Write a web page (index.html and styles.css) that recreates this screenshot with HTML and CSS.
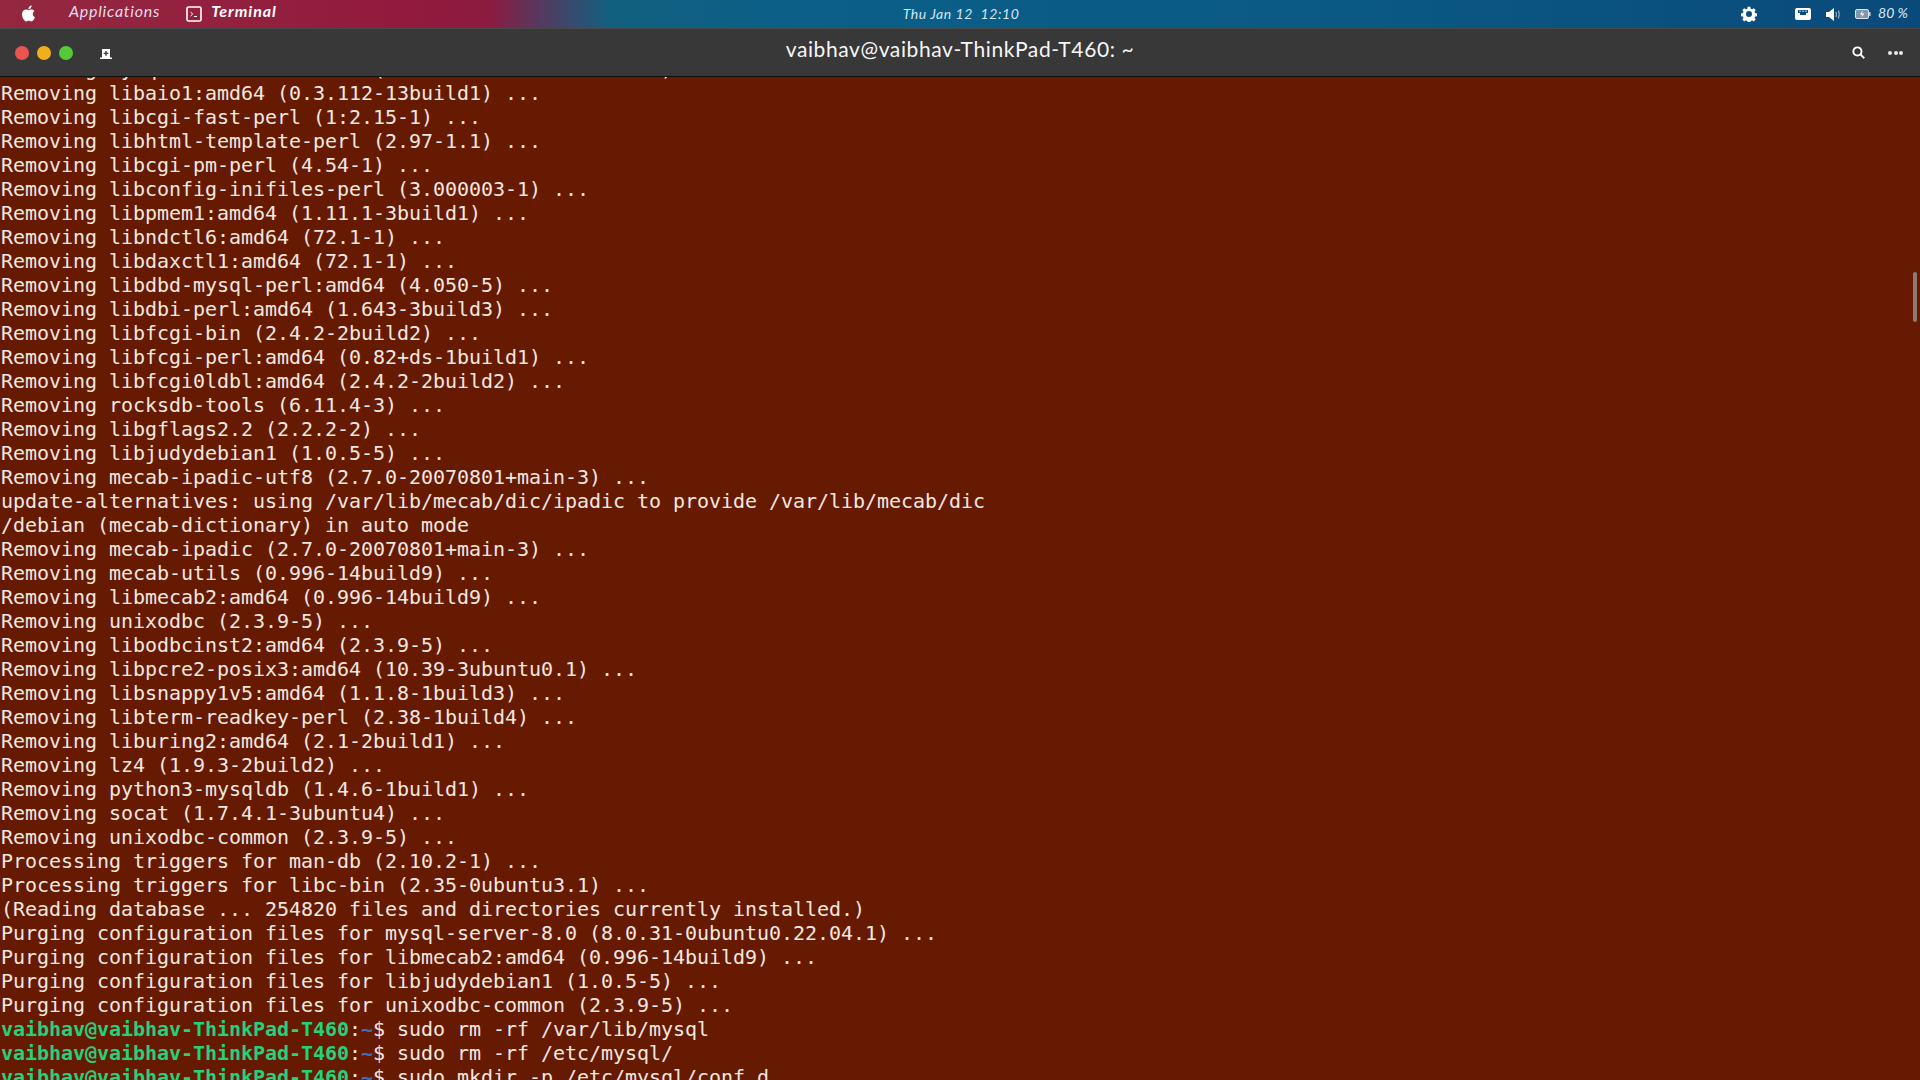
FILE: index.html
```html
<!DOCTYPE html>
<html lang="en">
<head>
<meta charset="utf-8">
<title>vaibhav@vaibhav-ThinkPad-T460: ~</title>
<link rel="stylesheet" href="styles.css">
</head>
<body>
<header class="topbar">
  <div class="topbar-left">
    <svg class="apple" viewBox="0 0 24 24"><path fill="#fff" d="M18.71 19.5c-.83 1.24-1.71 2.45-3.05 2.47-1.34.03-1.77-.79-3.29-.79-1.53 0-2 .77-3.27.82-1.31.05-2.3-1.32-3.14-2.53C4.25 17 2.94 12.45 4.7 9.39c.87-1.52 2.43-2.48 4.12-2.51 1.28-.02 2.5.87 3.29.87.78 0 2.26-1.07 3.81-.91.65.03 2.47.26 3.64 1.98-.09.06-2.17 1.28-2.15 3.81.03 3.02 2.65 4.03 2.68 4.04-.03.07-.42 1.44-1.38 2.83M13 3.5c.73-.83 1.94-1.46 2.94-1.5.13 1.17-.34 2.35-1.04 3.19-.69.85-1.83 1.51-2.95 1.42-.15-1.15.41-2.35 1.05-3.11z"/></svg>
    <span class="menu-apps">Applications</span>
    <svg class="term-icon" viewBox="0 0 16 16"><rect x="1" y="1" width="14" height="14" rx="1.5" fill="none" stroke="#fff" stroke-width="1.6"/><path d="M4.5 6l2.2 2-2.2 2M8 10.5h3" fill="none" stroke="#fff" stroke-width="1"/></svg>
    <span class="menu-term">Terminal</span>
  </div>
  <div class="clock">Thu Jan 12&nbsp; 12:10</div>
  <div class="topbar-right">
    <svg class="gear" viewBox="0 0 24 24"><path fill="#fff" fill-rule="evenodd" d="M10 1h4l.6 3 2 .9 2.6-1.7 2.8 2.8-1.7 2.6.9 2 3 .6v4l-3 .6-.9 2 1.7 2.6-2.8 2.8-2.6-1.7-2 .9-.6 3h-4l-.6-3-2-.9-2.6 1.7-2.8-2.8 1.7-2.6-.9-2-3-.6v-4l3-.6.9-2L2 6l2.800-2.800 2.600 1.700 2-.9zM12 7.500a4.500 4.500 0 1 0 0 9 4.500 4.500 0 0 0 0-9z"/></svg>
    <svg class="net" viewBox="0 0 16 12"><path fill="#fff" fill-rule="evenodd" d="M2 0h12a2 2 0 0 1 2 2v8a2 2 0 0 1-2 2H2a2 2 0 0 1-2-2V2a2 2 0 0 1 2-2zM3 2v3h2v2h6V5h2V2z"/><path fill="#fff" d="M4.500 2.500h1v1.500h-1zM7.500 2.500h1v1.500h-1zM10.500 2.500h1v1.500h-1z"/></svg>
    <svg class="vol" viewBox="0 0 15 13"><path fill="#fff" d="M0 4h3l5-4v13l-5-4H0z"/><path d="M10 4q1 2.500 0 5M12.500 2.500q1.500 4 0 8" fill="none" stroke="#b9c8d4" stroke-width="1"/></svg>
    <svg class="batt" viewBox="0 0 16 10"><rect x=".5" y=".5" width="13" height="9" rx="1.500" fill="#7f97ab" stroke="#dfe7ee"/><rect x="14.200" y="3" width="1.300" height="4" fill="#dfe7ee"/><path d="M7.800 1.500L5 5.500h2.500L6.500 8.500 9.500 4.500H7z" fill="#fff"/></svg>
    <span class="percent">80 %</span>
  </div>
</header>
<div class="titlebar">
  <div class="title-left">
    <div class="lights">
      <span class="light red"></span>
      <span class="light amber"></span>
      <span class="light green"></span>
    </div>
    <svg class="newtab" viewBox="0 0 12 10"><path fill="#fff" fill-rule="evenodd" d="M2 0h8v8.500h2V10H0V8.500h2zM5.300 2v1.700H3.700v1.300h1.600v1.700h1.400V5h1.600V3.700H6.700V2z"/></svg>
  </div>
  <div class="title">vaibhav@vaibhav-ThinkPad-T460: ~</div>
  <div class="title-right">
    <svg class="search" viewBox="0 0 12 12"><circle cx="5" cy="5" r="3.800" fill="none" stroke="#fff" stroke-width="1.700"/><path d="M7.800 7.800L11.300 11.300" stroke="#fff" stroke-width="1.700"/></svg>
    <div class="more"><i></i><i></i><i></i></div>
  </div>
</div>
<main class="terminal">
<pre class="output">Removing mysql-server-core-8.0 (8.0.31-0ubuntu0.22.04.1) ...
Removing libaio1:amd64 (0.3.112-13build1) ...
Removing libcgi-fast-perl (1:2.15-1) ...
Removing libhtml-template-perl (2.97-1.1) ...
Removing libcgi-pm-perl (4.54-1) ...
Removing libconfig-inifiles-perl (3.000003-1) ...
Removing libpmem1:amd64 (1.11.1-3build1) ...
Removing libndctl6:amd64 (72.1-1) ...
Removing libdaxctl1:amd64 (72.1-1) ...
Removing libdbd-mysql-perl:amd64 (4.050-5) ...
Removing libdbi-perl:amd64 (1.643-3build3) ...
Removing libfcgi-bin (2.4.2-2build2) ...
Removing libfcgi-perl:amd64 (0.82+ds-1build1) ...
Removing libfcgi0ldbl:amd64 (2.4.2-2build2) ...
Removing rocksdb-tools (6.11.4-3) ...
Removing libgflags2.2 (2.2.2-2) ...
Removing libjudydebian1 (1.0.5-5) ...
Removing mecab-ipadic-utf8 (2.7.0-20070801+main-3) ...
update-alternatives: using /var/lib/mecab/dic/ipadic to provide /var/lib/mecab/dic
/debian (mecab-dictionary) in auto mode
Removing mecab-ipadic (2.7.0-20070801+main-3) ...
Removing mecab-utils (0.996-14build9) ...
Removing libmecab2:amd64 (0.996-14build9) ...
Removing unixodbc (2.3.9-5) ...
Removing libodbcinst2:amd64 (2.3.9-5) ...
Removing libpcre2-posix3:amd64 (10.39-3ubuntu0.1) ...
Removing libsnappy1v5:amd64 (1.1.8-1build3) ...
Removing libterm-readkey-perl (2.38-1build4) ...
Removing liburing2:amd64 (2.1-2build1) ...
Removing lz4 (1.9.3-2build2) ...
Removing python3-mysqldb (1.4.6-1build1) ...
Removing socat (1.7.4.1-3ubuntu4) ...
Removing unixodbc-common (2.3.9-5) ...
Processing triggers for man-db (2.10.2-1) ...
Processing triggers for libc-bin (2.35-0ubuntu3.1) ...
(Reading database ... 254820 files and directories currently installed.)
Purging configuration files for mysql-server-8.0 (8.0.31-0ubuntu0.22.04.1) ...
Purging configuration files for libmecab2:amd64 (0.996-14build9) ...
Purging configuration files for libjudydebian1 (1.0.5-5) ...
Purging configuration files for unixodbc-common (2.3.9-5) ...
<b class="host">vaibhav@vaibhav-ThinkPad-T460</b>:<b class="path">~</b>$ sudo rm -rf /var/lib/mysql
<b class="host">vaibhav@vaibhav-ThinkPad-T460</b>:<b class="path">~</b>$ sudo rm -rf /etc/mysql/
<b class="host">vaibhav@vaibhav-ThinkPad-T460</b>:<b class="path">~</b>$ sudo mkdir -p /etc/mysql/conf.d</pre>
<div class="scrollthumb"></div>
</main>
</body>
</html>
```
FILE: styles.css
```css
* { box-sizing: border-box; }
html, body { margin: 0; height: 100%; overflow: hidden; }
body { display: flex; flex-direction: column; height: 1080px; background: #671a02; }

.topbar {
  flex: 0 0 28px;
  display: grid;
  grid-template-columns: 1fr auto 1fr;
  align-items: center;
  color: #fff;
  font-family: "Lato", sans-serif;
  background: linear-gradient(90deg, #94283f 0, #921a3e 400px, #8c1b40 490px, #55395f 540px, #12607f 610px, #0b5f88 800px, #0a5a85 1300px, #0a4a7b 1920px);
}
.topbar-left { display: flex; align-items: center; padding-left: 19px; }
.apple { width: 19px; height: 19px; margin-top: -1px; }
.menu-apps { margin-left: 31px; font-size: 16px; font-style: italic; color: #e6dcef; letter-spacing: .75px; margin-top: -7px; }
.term-icon { width: 16px; height: 16px; margin-left: 26px; }
.menu-term { margin-left: 9px; font-size: 16px; font-style: italic; font-weight: 700; letter-spacing: .95px; margin-top: -7px; }
.clock { font-size: 14px; font-style: italic; color: #d4e6ef; letter-spacing: .55px; margin: -2px 0 0 2px; }
.topbar-right { display: flex; align-items: center; justify-content: flex-end; padding-right: 12px; }
.gear { width: 16px; height: 16px; }
.net { width: 16px; height: 12px; margin-left: 38px; }
.vol { width: 15px; height: 13px; margin-left: 15px; }
.batt { width: 16px; height: 10px; margin-left: 14px; }
.percent { margin-left: 7px; font-size: 14px; font-style: italic; color: #dbe9f2; margin-top: -4px; }

.titlebar {
  flex: 0 0 49px;
  display: grid;
  grid-template-columns: 1fr auto 1fr;
  align-items: center;
  background: #383838;
  border-top: 1px solid #4a4a4a;
  border-bottom: 1px solid #0f0f0f;
}
.title-left { display: flex; align-items: center; padding-left: 15px; }
.lights { display: flex; gap: 8px; }
.light { width: 14px; height: 14px; border-radius: 50%; }
.red { background: #ec5450; }
.amber { background: #f2af1c; }
.green { background: #57c838; }
.newtab { width: 12px; height: 10px; margin-left: 27px; margin-top: 2px; }
.title { color: #f6f6f6; font-family: "Lato", sans-serif; font-weight: 400; font-size: 21px; letter-spacing: .6px; margin-top: -9px; }
.title-right { display: flex; align-items: center; justify-content: flex-end; padding-right: 17px; }
.search { width: 13px; height: 13px; }
.more { display: flex; gap: 1.500px; margin-left: 23px; }
.more i { width: 4px; height: 4px; border-radius: 50%; background: #e8e8e8; }

.terminal { flex: 1; position: relative; overflow: hidden; background: #671a02; }
.output {
  margin: -20px 0 0 1px;
  font-family: "DejaVu Sans Mono", monospace;
  font-size: 20px;
  line-height: 24px;
  letter-spacing: -.04px;
  color: #f1e7e0;
}
.host { color: #26d07c; font-weight: 700; }
.path { color: #3f6fc0; font-weight: 700; }
.scrollthumb { position: absolute; right: 3px; top: 195px; width: 4px; height: 50px; border-radius: 2px; background: #8d7b73; }
```
